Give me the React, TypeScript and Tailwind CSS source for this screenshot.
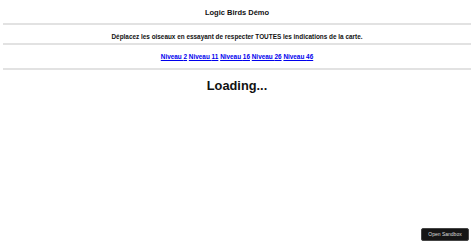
const levels = [2, 11, 16, 26, 46]

function Rule({ className = '' }: { className?: string }) {
  return <div className={`h-[2px] bg-[#e2e2e2] ${className}`} />
}

export default function App() {
  return (
    <div
      className="relative w-[474px] h-[248px] bg-white text-[#111] overflow-hidden"
      style={{ fontFamily: '"Liberation Sans", Arial, sans-serif' }}
    >
      <div className="flex flex-col px-[3px]">
        <div className="mt-[8px] h-[9px] leading-[9px] text-center text-[7.5px] font-bold">
          Logic Birds Démo
        </div>
        <Rule className="mt-[6px]" />
        <div className="mt-[8px] h-[8px] leading-[8px] text-center text-[6.4px] font-bold">
          Déplacez les oiseaux en essayant de respecter TOUTES les indications de la carte.
        </div>
        <Rule className="mt-[2px]" />
        <div className="mt-[8px] h-[8px] leading-[8px] text-center text-[6.4px] font-bold">
          {levels.map((n, i) => (
            <span key={n}>
              <a href="#" className="text-[#0000ee] underline">
                Niveau {n}
              </a>
              {i < levels.length - 1 ? ' ' : ''}
            </span>
          ))}
        </div>
        <Rule className="mt-[7px]" />
        <div className="mt-[8px] h-[15px] leading-[15px] text-center text-[12.8px] font-bold">
          Loading...
        </div>
      </div>
      <button className="absolute right-[5px] bottom-[7px] w-[48px] h-[13px] rounded-[2px] bg-[#151515] border border-[#444] text-[#ddd] text-[5px] leading-none flex items-center justify-center">
        Open Sandbox
      </button>
    </div>
  )
}
